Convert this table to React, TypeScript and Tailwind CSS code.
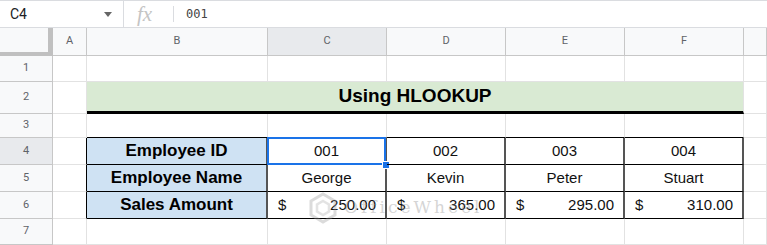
import React from 'react'

const HEAD = 'bg-[#f8f9fa] border-r border-b border-[#c7c7c7] flex items-center justify-center text-[11px] text-[#5f6368] font-["Roboto",sans-serif]'
const GRID = 'border-r border-b border-[#e2e2e2]'
const TBL = 'border-r-2 border-b border-r-[#555] border-b-black flex items-center text-[15px] text-[#111] font-["Liberation_Sans",Arial,sans-serif]'

const columns = ['A', 'B', 'C', 'D', 'E', 'F', '']

const employees = [
  { id: '001', name: 'George', sales: '250.00' },
  { id: '002', name: 'Kevin', sales: '365.00' },
  { id: '003', name: 'Peter', sales: '295.00' },
  { id: '004', name: 'Stuart', sales: '310.00' },
]

function RowHead({ n, active }: { n: number; active?: boolean }) {
  return <div className={`${HEAD} ${active ? '!bg-[#e8eaed]' : ''}`}>{n}</div>
}

function Blank({ extra = '' }: { extra?: string }) {
  return <div className={`${GRID} ${extra}`} />
}

function Label({ text }: { text: string }) {
  return (
    <div className={`${TBL} justify-center bg-[#cfe2f3] border-r-[#333] font-bold text-[17px] text-black`}>
      {text}
    </div>
  )
}

function FormulaBar() {
  return (
    <div className="flex h-[28px] items-center border-t border-b border-[#dadce0] bg-white font-['Roboto',sans-serif]">
      <div className="flex w-[123px] items-center justify-between pl-[10px] pr-[11px] text-[14px] text-[#202124]">
        <span>C4</span>
        <svg width="8" height="5" viewBox="0 0 8 5"><path d="M0 0h8L4 5z" fill="#666" /></svg>
      </div>
      <div className="h-full w-px bg-[#dadce0]" />
      <div className="w-[49px] pl-[13px] font-['Liberation_Serif',serif] text-[21px] italic leading-none text-[#c4c4c4]">fx</div>
      <div className="h-[16px] w-px bg-[#dadce0]" />
      <div className="pl-[12px] font-['DejaVu_Sans_Mono',monospace] text-[12px] text-[#444]">001</div>
    </div>
  )
}

// faint site mark laid over the sales row
function Watermark() {
  return (
    <div className="pointer-events-none absolute left-[308px] top-[192px] flex items-center gap-[6px] opacity-35">
      <svg width="30" height="32" viewBox="0 0 30 32">
        <path d="M15 2 27 9v14l-12 7-12-7V9z" fill="none" stroke="#9a9a9a" strokeWidth="3" />
        <path d="M15 9 21 12.5v7L15 23l-6-3.5v-7z" fill="none" stroke="#b0b0b0" strokeWidth="2.5" />
      </svg>
      <span className="font-['DejaVu_Serif',serif] text-[17px] tracking-[3px] text-[#8a8a8a]">OfficeWheel</span>
    </div>
  )
}

export default function App() {
  return (
    <div className="relative h-[245px] w-[767px] overflow-hidden bg-white">
      <FormulaBar />
      <div className="grid grid-cols-[53px_34px_181px_119px_119px_119px_119px_1fr] grid-rows-[28px_26px_32px_24px_27px_27px_27px_26px]">
        {/* column headers */}
        <div className="border-r-[5px] border-b-[4px] border-[#c0c0c0] bg-[#f8f9fa]" />
        {columns.map((c, i) => (
          <div key={i} className={`${HEAD} ${c === 'C' ? '!bg-[#e8eaed]' : ''}`}>{c}</div>
        ))}

        {/* row 1 */}
        <RowHead n={1} />
        {columns.map((_, i) => <Blank key={i} />)}

        {/* row 2 – title banner */}
        <RowHead n={2} />
        <Blank />
        <div className="col-span-5 flex items-center justify-center border-r border-b-[3px] border-r-[#e2e2e2] border-b-black bg-[#d9ead3] font-['Liberation_Sans',Arial,sans-serif] text-[19px] font-bold text-black">
          Using HLOOKUP
        </div>
        <Blank />

        {/* row 3 */}
        <RowHead n={3} />
        <Blank />
        {[0, 1, 2, 3, 4].map(i => <Blank key={i} extra="border-b-black" />)}
        <Blank />

        {/* row 4 – ids */}
        <RowHead n={4} active />
        <Blank extra="border-r-black" />
        <Label text="Employee ID" />
        {employees.map((e, i) => (
          <div key={e.id} className={`${TBL} relative justify-center`}>
            {e.id}
            {i === 0 && (
              <>
                <div className="pointer-events-none absolute inset-[-1px] border-2 border-[#1a73e8]" />
                <div className="absolute bottom-[-5px] right-[-5px] h-[8px] w-[8px] border border-white bg-[#1a73e8]" />
              </>
            )}
          </div>
        ))}
        <Blank />

        {/* row 5 – names */}
        <RowHead n={5} />
        <Blank extra="border-r-black" />
        <Label text="Employee Name" />
        {employees.map(e => (
          <div key={e.id} className={`${TBL} justify-center`}>{e.name}</div>
        ))}
        <Blank />

        {/* row 6 – sales */}
        <RowHead n={6} />
        <Blank extra="border-r-black" />
        <Label text="Sales Amount" />
        {employees.map(e => (
          <div key={e.id} className={`${TBL} justify-between pl-[10px] pr-[9px]`}>
            <span>$</span>
            <span>{e.sales}</span>
          </div>
        ))}
        <Blank />

        {/* row 7 */}
        <RowHead n={7} />
        {columns.map((_, i) => <Blank key={i} />)}
      </div>
      <Watermark />
    </div>
  )
}
